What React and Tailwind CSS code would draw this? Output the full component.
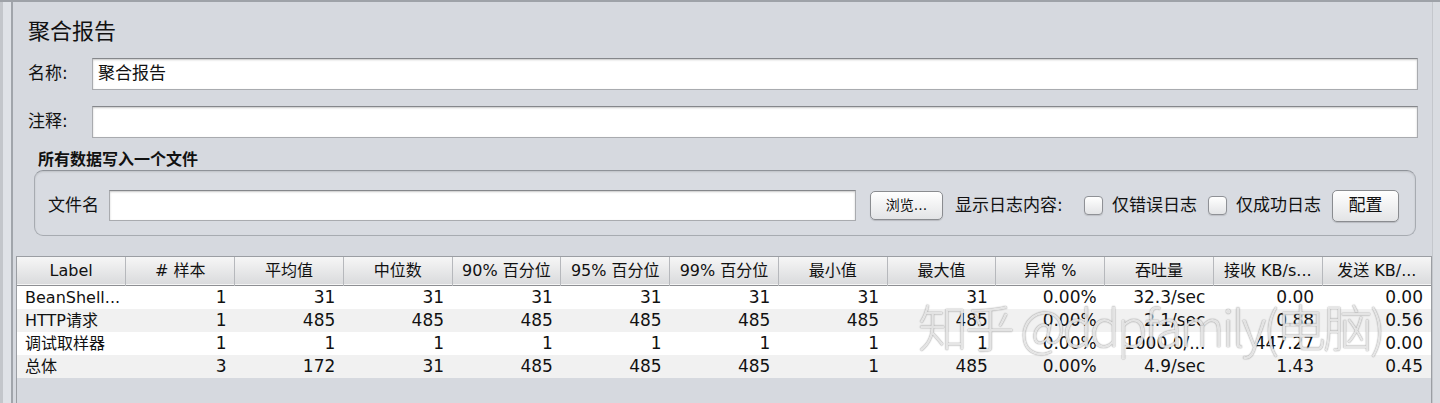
import React from "react";

const FONT = { fontFamily: "'DejaVu Sans','Noto Sans CJK SC',sans-serif" };

const headers = [
  "Label",
  "# 样本",
  "平均值",
  "中位数",
  "90% 百分位",
  "95% 百分位",
  "99% 百分位",
  "最小值",
  "最大值",
  "异常 %",
  "吞吐量",
  "接收 KB/s...",
  "发送 KB/...",
];

const rows = [
  ["BeanShell...", "1", "31", "31", "31", "31", "31", "31", "31", "0.00%", "32.3/sec", "0.00", "0.00"],
  ["HTTP请求", "1", "485", "485", "485", "485", "485", "485", "485", "0.00%", "2.1/sec", "0.88", "0.56"],
  ["调试取样器", "1", "1", "1", "1", "1", "1", "1", "1", "0.00%", "1000.0/...", "447.27", "0.00"],
  ["总体", "3", "172", "31", "485", "485", "485", "1", "485", "0.00%", "4.9/sec", "1.43", "0.45"],
];

function TextInput({ value, className = "" }) {
  return (
    <div
      className={
        "shrink-0 bg-white border border-[#a9abaf] border-t-[#85878b] shadow-[inset_0_1px_2px_rgba(0,0,0,0.22)] flex items-center px-[5px] text-[17px] text-[#111] " +
        className
      }
    >
      {value}
    </div>
  );
}

function Checkbox() {
  return (
    <div className="shrink-0 w-[19px] h-[19px] rounded-[4px] border border-[#8f9196] bg-linear-to-b from-white to-[#e3e4e6] shadow-[0_1px_1px_rgba(0,0,0,0.12)]" />
  );
}

export default function App() {
  return (
    <div
      className="relative w-[1440px] h-[403px] overflow-hidden bg-[#d6d9df] border-t-2 border-[#9ea2a8] flex text-[#111]"
      style={FONT}
    >
      {/* left strip */}
      <div className="w-[13px] shrink-0 bg-[#dfe2e7] border-l-[3px] border-l-[#c3c6cb] border-r-2 border-r-[#a1a5ab]" />

      {/* main column */}
      <div className="flex-1 flex flex-col pl-[3px] min-h-0">
        <div className="shrink-0 mt-[16px] h-[28px] leading-[28px] text-[22px] pl-[12px]">聚合报告</div>

        <div className="shrink-0 mt-[12px] h-[32px] flex items-center pl-[12px] pr-[14px]">
          <div className="w-[64px] text-[17px]">名称:</div>
          <TextInput value="聚合报告" className="flex-1 h-[32px]" />
        </div>

        <div className="shrink-0 mt-[16px] h-[32px] flex items-center pl-[12px] pr-[14px]">
          <div className="w-[64px] text-[17px]">注释:</div>
          <TextInput value="" className="flex-1 h-[32px]" />
        </div>

        <div className="shrink-0 mt-[12px] h-[20px] leading-[20px] pl-[22px] text-[16px] font-bold">所有数据写入一个文件</div>

        <div className="shrink-0 ml-[18px] mr-[16px] h-[66px] rounded-[9px] border border-[#a7abb1] border-t-[#8f9399] shadow-[inset_0_1px_2px_rgba(0,0,0,0.12)] bg-[#d8dbe1] flex items-center pt-[5px] pl-[13px]">
          <div className="w-[61px] text-[17px]">文件名</div>
          <TextInput value="" className="w-[747px] h-[31px]" />
          <button className="shrink-0 ml-[14px] w-[73px] h-[29px] rounded-[5px] border border-[#8a8c90] bg-linear-to-b from-white to-[#e3e4e6] shadow-[0_1px_1px_rgba(0,0,0,0.15)] text-[14px] flex items-center justify-center">
            浏览...
          </button>
          <div className="shrink-0 ml-[12px] text-[17px] w-[129px] whitespace-nowrap">显示日志内容:</div>
          <Checkbox />
          <div className="shrink-0 ml-[9px] mr-[11px] text-[17px] whitespace-nowrap">仅错误日志</div>
          <Checkbox />
          <div className="shrink-0 ml-[9px] mr-[11px] text-[17px] whitespace-nowrap">仅成功日志</div>
          <button className="shrink-0 w-[67px] h-[32px] rounded-[5px] border border-[#8a8c90] bg-linear-to-b from-white to-[#e3e4e6] shadow-[0_1px_1px_rgba(0,0,0,0.15)] text-[17px] flex items-center justify-center">
            配置
          </button>
        </div>

        {/* table */}
        <div className="shrink-0 mt-[20px] h-[170px] border border-[#9b9ea3] bg-[#d6d9df]">
          <table className="w-full table-fixed border-collapse">
            <thead>
              <tr className="h-[28px] bg-linear-to-b from-[#f6f6f6] to-[#dadbdd] border-b border-[#8d8f93] text-[16px]">
                {headers.map((h, i) => (
                  <th
                    key={i}
                    className={
                      "font-normal text-center whitespace-nowrap overflow-hidden p-0 " +
                      (i < headers.length - 1 ? "border-r border-[#b6b8bc]" : "")
                    }
                  >
                    {h}
                  </th>
                ))}
              </tr>
            </thead>
            <tbody className="text-[17px]">
              {rows.map((r, ri) => (
                <tr key={ri} className={"h-[23px] " + (ri % 2 === 0 ? "bg-white" : "bg-[#f1f1f1]")}>
                  {r.map((c, ci) => (
                    <td
                      key={ci}
                      className={
                        "p-0 whitespace-nowrap overflow-hidden leading-[23px] " +
                        (ci === 0 ? "text-left pl-[8px] text-[16px]" : "text-right pr-[8px]")
                      }
                    >
                      {c}
                    </td>
                  ))}
                </tr>
              ))}
            </tbody>
          </table>
        </div>
      </div>

      {/* right strip */}
      <div className="w-[8px] shrink-0 bg-[#d9dce1] border-l border-[#c4c7cc]" />

      {/* watermark */}
      <div
        className="pointer-events-none absolute left-[918px] top-[298px] text-[50px] tracking-[-3px] leading-none font-light whitespace-nowrap text-[rgba(255,255,255,0.8)] [text-shadow:0_0_1px_rgba(0,0,0,0.45),0_0_2px_rgba(0,0,0,0.2)]"
        style={{ fontFamily: "'Noto Sans CJK SC','Noto Sans',sans-serif" }}
      >
        知乎 @ddpfamily(电脑)
      </div>
    </div>
  );
}
